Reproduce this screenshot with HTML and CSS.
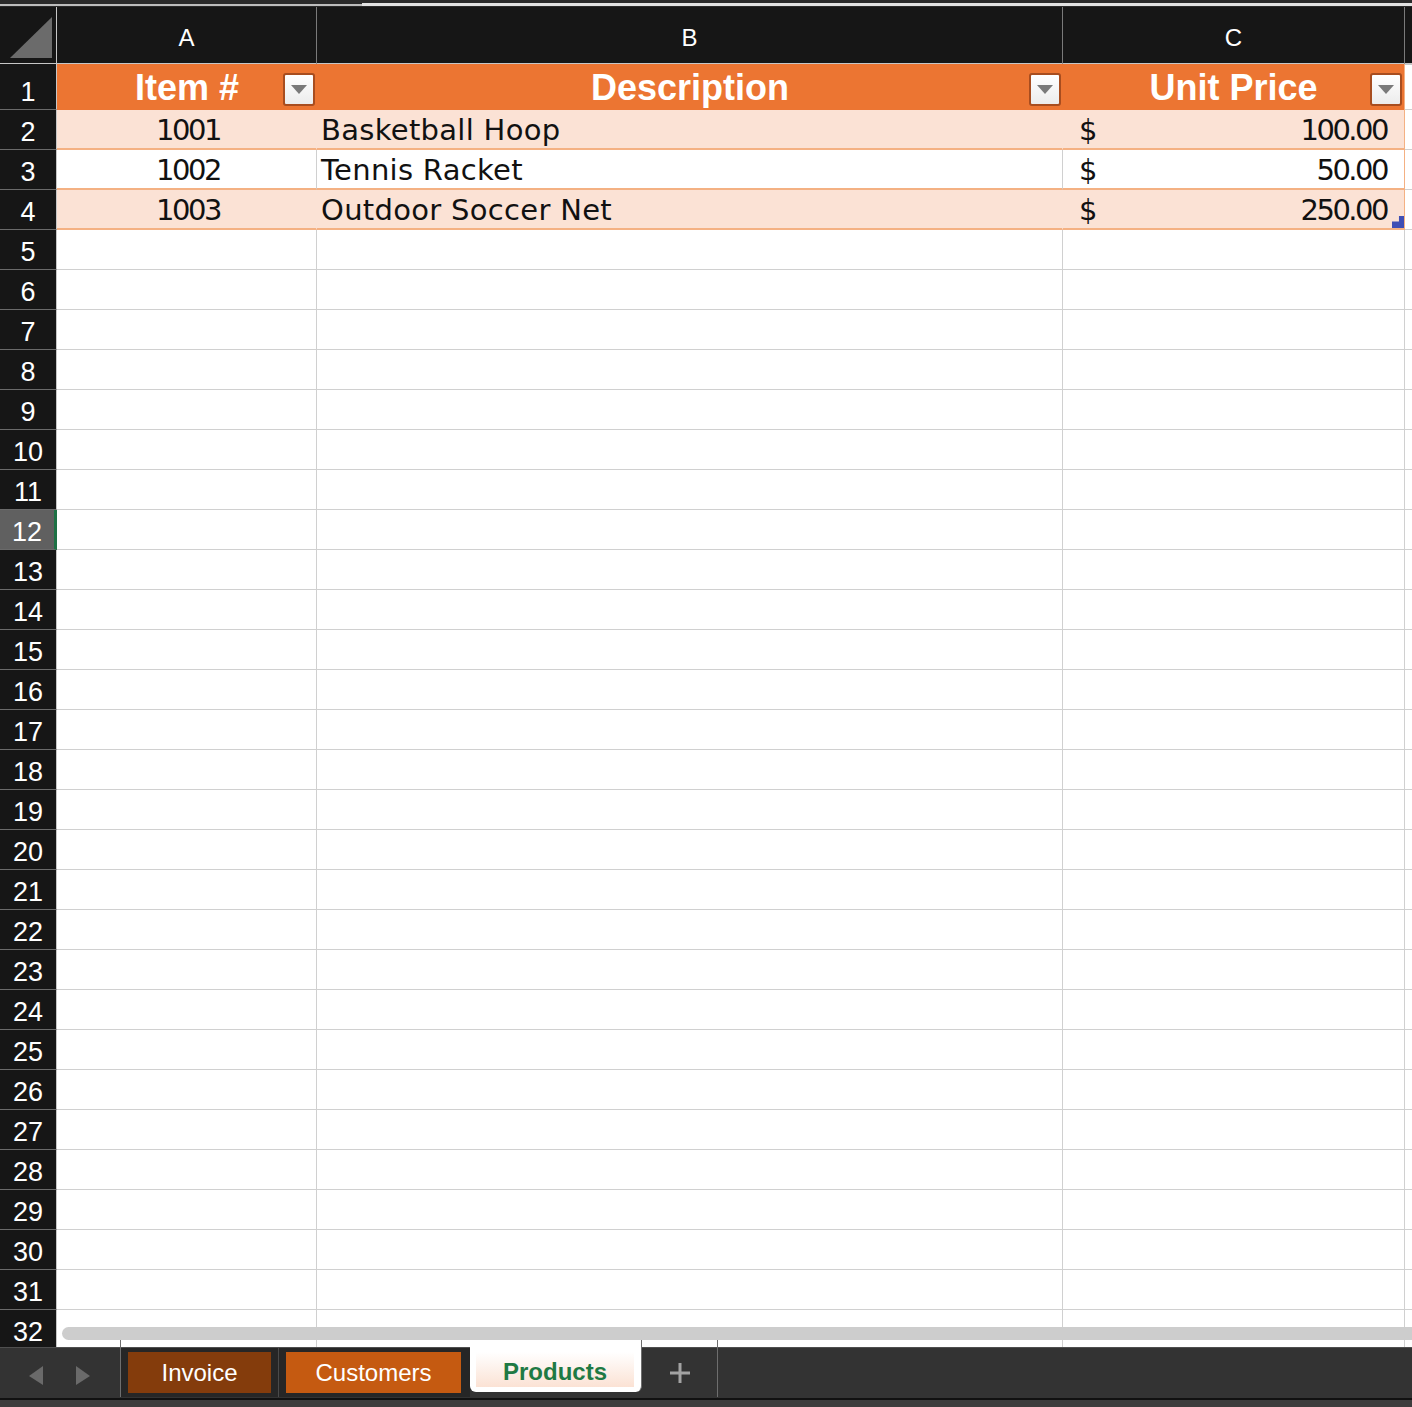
FILE: index.html
```html
<!DOCTYPE html>
<html>
<head>
<meta charset="utf-8">
<link rel="stylesheet" href="styles.css">
</head>
<body>
<div class="topstrip"><div class="ts-l"></div><div class="ts-r"></div></div>
<div class="sheet">
  <div class="row colhead">
    <div class="corner"><svg width="56" height="56" viewBox="0 0 56 56"><polygon points="10,51 52,51 52,10" fill="#6b6b6b"/></svg></div>
    <div class="ch">A</div>
    <div class="ch">B</div>
    <div class="ch">C</div>
    <div class="ch last"></div>
  </div>
  <div class="row r1">
    <div class="rh">1</div>
    <div class="th">Item #<span class="dd"><span class="tri"></span></span></div>
    <div class="th">Description<span class="dd"><span class="tri"></span></span></div>
    <div class="th thc">Unit Price<span class="dd"><span class="tri"></span></span></div>
    <div class="c d"></div>
  </div>
  <div class="row">
    <div class="rh">2</div>
    <div class="td band num">1001</div>
    <div class="td band txt">Basketball Hoop</div>
    <div class="td band price"><span>$</span><span>100.00</span></div>
    <div class="c d"></div>
  </div>
  <div class="row">
    <div class="rh">3</div>
    <div class="td plain num">1002</div>
    <div class="td plain txt">Tennis Racket</div>
    <div class="td plain price"><span>$</span><span>50.00</span></div>
    <div class="c d"></div>
  </div>
  <div class="row">
    <div class="rh">4</div>
    <div class="td band num">1003</div>
    <div class="td band txt">Outdoor Soccer Net</div>
    <div class="td band price"><span>$</span><span>250.00</span><span class="handle"></span></div>
    <div class="c d"></div>
  </div>
  <div class="row"><div class="rh">5</div><div class="c"></div><div class="c"></div><div class="c"></div><div class="c d"></div></div>
  <div class="row"><div class="rh">6</div><div class="c"></div><div class="c"></div><div class="c"></div><div class="c d"></div></div>
  <div class="row"><div class="rh">7</div><div class="c"></div><div class="c"></div><div class="c"></div><div class="c d"></div></div>
  <div class="row"><div class="rh">8</div><div class="c"></div><div class="c"></div><div class="c"></div><div class="c d"></div></div>
  <div class="row"><div class="rh">9</div><div class="c"></div><div class="c"></div><div class="c"></div><div class="c d"></div></div>
  <div class="row"><div class="rh">10</div><div class="c"></div><div class="c"></div><div class="c"></div><div class="c d"></div></div>
  <div class="row"><div class="rh">11</div><div class="c"></div><div class="c"></div><div class="c"></div><div class="c d"></div></div>
  <div class="row"><div class="rh sel">12</div><div class="c"></div><div class="c"></div><div class="c"></div><div class="c d"></div></div>
  <div class="row"><div class="rh">13</div><div class="c"></div><div class="c"></div><div class="c"></div><div class="c d"></div></div>
  <div class="row"><div class="rh">14</div><div class="c"></div><div class="c"></div><div class="c"></div><div class="c d"></div></div>
  <div class="row"><div class="rh">15</div><div class="c"></div><div class="c"></div><div class="c"></div><div class="c d"></div></div>
  <div class="row"><div class="rh">16</div><div class="c"></div><div class="c"></div><div class="c"></div><div class="c d"></div></div>
  <div class="row"><div class="rh">17</div><div class="c"></div><div class="c"></div><div class="c"></div><div class="c d"></div></div>
  <div class="row"><div class="rh">18</div><div class="c"></div><div class="c"></div><div class="c"></div><div class="c d"></div></div>
  <div class="row"><div class="rh">19</div><div class="c"></div><div class="c"></div><div class="c"></div><div class="c d"></div></div>
  <div class="row"><div class="rh">20</div><div class="c"></div><div class="c"></div><div class="c"></div><div class="c d"></div></div>
  <div class="row"><div class="rh">21</div><div class="c"></div><div class="c"></div><div class="c"></div><div class="c d"></div></div>
  <div class="row"><div class="rh">22</div><div class="c"></div><div class="c"></div><div class="c"></div><div class="c d"></div></div>
  <div class="row"><div class="rh">23</div><div class="c"></div><div class="c"></div><div class="c"></div><div class="c d"></div></div>
  <div class="row"><div class="rh">24</div><div class="c"></div><div class="c"></div><div class="c"></div><div class="c d"></div></div>
  <div class="row"><div class="rh">25</div><div class="c"></div><div class="c"></div><div class="c"></div><div class="c d"></div></div>
  <div class="row"><div class="rh">26</div><div class="c"></div><div class="c"></div><div class="c"></div><div class="c d"></div></div>
  <div class="row"><div class="rh">27</div><div class="c"></div><div class="c"></div><div class="c"></div><div class="c d"></div></div>
  <div class="row"><div class="rh">28</div><div class="c"></div><div class="c"></div><div class="c"></div><div class="c d"></div></div>
  <div class="row"><div class="rh">29</div><div class="c"></div><div class="c"></div><div class="c"></div><div class="c d"></div></div>
  <div class="row"><div class="rh">30</div><div class="c"></div><div class="c"></div><div class="c"></div><div class="c d"></div></div>
  <div class="row"><div class="rh">31</div><div class="c"></div><div class="c"></div><div class="c"></div><div class="c d"></div></div>
  <div class="row"><div class="rh">32</div><div class="c"></div><div class="c"></div><div class="c"></div><div class="c d"></div></div>
  <div class="hscroll"></div>
</div>
<div class="tabbar">
  <div class="nav">
    <svg width="120" height="50" viewBox="0 0 120 50"><polygon points="29,28 43,18 43,37" fill="#6a6a6a"/><polygon points="90,28 76,18 76,37" fill="#6a6a6a"/></svg>
  </div>
  <div class="sep"></div>
  <div class="tabframe">
    <div class="tab invoice">Invoice</div>
    <div class="tabsep"></div>
    <div class="tab customers">Customers</div>
  </div>
  <div class="tab-active"><div class="tab-inner">Products</div></div>
  <div class="addtab"><svg width="22" height="22" viewBox="0 0 22 22"><rect x="9.5" y="1" width="3" height="20" fill="#a3a3a3"/><rect x="1" y="9.5" width="20" height="3" fill="#a3a3a3"/></svg></div>
  <div class="sep"></div>
  <div class="tabrest"></div>
</div>
<div class="bottomstrip"></div>
</body>
</html>
```
FILE: styles.css
```css
* { box-sizing: border-box; }
html, body { margin: 0; padding: 0; }
body {
  width: 1412px;
  height: 1407px;
  overflow: hidden;
  background: #333;
  font-family: "Liberation Sans", Arial, sans-serif;
}
.topstrip {
  height: 7px;
  background: #2a2a2a;
  display: flex;
  align-items: flex-end;
}
.ts-l { width: 362px; height: 2px; margin-bottom: 1px; background: #bdbdbd; }
.ts-r { flex: 1; height: 3px; margin-bottom: 1px; background: #e2e2e2; }

.sheet {
  position: relative;
  height: 1340px;
  overflow: hidden;
  background: #fff;
}
.row {
  display: grid;
  grid-template-columns: 57px 260px 746px 342px 7px;
  height: 40px;
}
.colhead { height: 57px; background: #161616; }
.corner {
  border-right: 1px solid #c6c6c6;
  border-bottom: 2px solid #c6c6c6;
}
.corner svg { display: block; }
.ch {
  color: #fff;
  font-size: 24px;
  display: flex;
  align-items: center;
  justify-content: center;
  padding-top: 5px;
  border-right: 1px solid #7a7a7a;
  border-bottom: 2px solid #c6c6c6;
}
.ch.last { border-right: none; }

.rh {
  background: #161616;
  color: #fff;
  font-size: 27px;
  line-height: 1;
  display: flex;
  justify-content: center;
  align-items: flex-end;
  padding-bottom: 3px;
  border-right: 1px solid #c6c6c6;
  border-bottom: 1px solid #6a6a6a;
}
.rh.sel {
  background: #606060;
  border-right: 3px solid #1e7145;
}
.c {
  border-right: 1px solid #d0d0d0;
  border-bottom: 1px solid #d0d0d0;
}
.c.d { border-right: none; }

.r1 { height: 46px; }
.th {
  position: relative;
  background: #ec7532;
  color: #fff;
  font-weight: bold;
  font-size: 36px;
  line-height: 1;
  display: flex;
  align-items: center;
  justify-content: center;
  padding-top: 2px;
}
.thc { border-right: 1px solid #f4b183; }
.dd {
  position: absolute;
  right: 2px;
  top: 9px;
  width: 32px;
  height: 33px;
  border: 2px solid #a84d1f;
  border-radius: 3px;
  background: linear-gradient(#ffffff, #ececec);
  display: flex;
  align-items: center;
  justify-content: center;
}
.tri {
  width: 0;
  height: 0;
  border-left: 8px solid transparent;
  border-right: 8px solid transparent;
  border-top: 9px solid #7a7a7a;
}

.td {
  font-family: "DejaVu Sans", "Liberation Sans", sans-serif;
  font-size: 29px;
  line-height: 1;
  color: #111;
  display: flex;
  align-items: center;
  padding-top: 3px;
  border-bottom: 2px solid #f4b183;
}
.td.band { background: #fbe2d5; border-right: 1px solid #fbe2d5; }
.td.plain { background: #fff; border-right: 1px solid #d0d0d0; }
.td.num { justify-content: center; padding-left: 3px; letter-spacing: -2.5px; }
.td.txt { padding-left: 4px; letter-spacing: 0.3px; }
.td.price {
  position: relative;
  justify-content: space-between;
  padding: 3px 17px 0 16px;
  letter-spacing: -2.5px;
  border-right: 1px solid #f4b183;
}
.handle {
  position: absolute;
  right: 0;
  bottom: 0;
  width: 12px;
  height: 12px;
  background: #3f4fb5;
  clip-path: polygon(58% 0, 100% 0, 100% 100%, 0 100%, 0 45%, 58% 45%);
}

.hscroll {
  position: absolute;
  left: 62px;
  right: 0;
  bottom: 7px;
  height: 13px;
  border-radius: 7px 0 0 7px;
  background: #cdcdcd;
}

.tabbar {
  position: relative;
  height: 53px;
  background: #333;
  border-top: 1px solid #4f4f4f;
  border-bottom: 2px solid #111;
  display: flex;
  align-items: flex-start;
}
.nav { width: 120px; height: 50px; }
.nav svg { display: block; }
.sep {
  width: 1px;
  height: 57px;
  margin-top: -8px;
  background: #6e6e6e;
}
.tabframe {
  display: flex;
  align-items: center;
  height: 49px;
  padding: 4px 9px 4px 7px;
  background: #262626;
}
.tab {
  height: 41px;
  color: #fff;
  font-size: 24px;
  display: flex;
  align-items: center;
  justify-content: center;
}
.invoice { width: 143px; background: #843c0c; }
.customers { width: 175px; background: #c55a11; }
.tabsep { width: 1px; height: 49px; margin: 0 7px; background: #4a4a4a; }
.tab-active {
  width: 172px;
  height: 52px;
  margin-top: -8px;
  background: #fff;
  border-radius: 0 0 6px 6px;
  border-right: 1px solid #6e6e6e;
  padding: 12px 7px 5px 6px;
}
.tab-inner {
  height: 35px;
  padding-top: 5px;
  background: linear-gradient(#ffffff, #fbe2d4);
  color: #1f7a44;
  font-weight: bold;
  font-size: 24px;
  display: flex;
  align-items: center;
  justify-content: center;
}
.addtab {
  width: 75px;
  height: 50px;
  display: flex;
  align-items: center;
  justify-content: center;
}
.addtab svg { display: block; }
.tabrest { flex: 1; }
.bottomstrip { height: 7px; background: #3d3d3d; }
```
